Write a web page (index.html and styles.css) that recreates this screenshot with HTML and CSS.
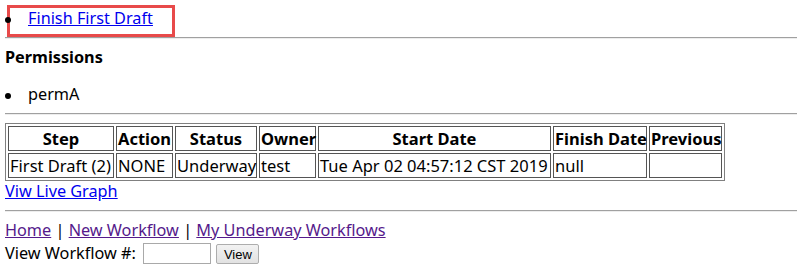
FILE: index.html
```html
<!DOCTYPE html>
<html lang="en">
<head>
    <meta charset="UTF-8">
    <title>Workflow</title>
    <link rel="stylesheet" href="styles.css">
</head>
<body>
    <div class="highlight"></div>

    <ul class="actions">
        <li><a class="link" href="#">Finish First Draft</a></li>
    </ul>
    <hr>

    <div class="section-title">Permissions</div>
    <ul class="perms">
        <li>permA</li>
    </ul>
    <hr>

    <table class="steps">
        <tr>
            <th class="col-step">Step</th>
            <th class="col-action">Action</th>
            <th class="col-status">Status</th>
            <th class="col-owner">Owner</th>
            <th class="col-start">Start Date</th>
            <th class="col-finish">Finish Date</th>
            <th class="col-prev">Previous</th>
        </tr>
        <tr>
            <td>First Draft (2)</td>
            <td>NONE</td>
            <td>Underway</td>
            <td>test</td>
            <td>Tue Apr 02 04:57:12 CST 2019</td>
            <td>null</td>
            <td></td>
        </tr>
    </table>
    <a class="link" href="#">Viw Live Graph</a>
    <hr>

    <div class="nav">
        <a class="visited" href="#">Home</a> | <a class="visited" href="#">New Workflow</a> | <a class="visited" href="#">My Underway Workflows</a>
    </div>
    <form class="view-form">
        View Workflow #: <input type="text" class="wf-input"> <button type="button" class="wf-button">View</button>
    </form>
</body>
</html>
```

FILE: styles.css
```css
body {
    margin: 8px 0 0 5px;
    font-family: "Noto Sans", Arial, sans-serif;
    font-size: 16.25px;
    line-height: 21px;
    color: #000;
    background-color: #fff;
}

.highlight {
    position: absolute;
    left: 7px;
    top: 5px;
    width: 168px;
    height: 32px;
    box-sizing: border-box;
    border: 3px solid #e84a4a;
}

ul {
    margin: 0;
    padding-left: 23px;
    list-style: none;
}

li {
    position: relative;
}

/* bullet drawn by hand so it sits where the original one does */
li::before {
    content: "";
    position: absolute;
    left: -23px;
    top: 9px;
    width: 6px;
    height: 6px;
    border-radius: 50%;
    background-color: #000;
}

.perms {
    margin-top: 16px;
}

hr {
    margin: 8px 0;
    height: 0;
    border: none;
    border-top: 1px solid #a0a0a0;
    border-bottom: 1px solid #ededed;
}

.section-title {
    font-weight: bold;
}

.link {
    color: #0000ee;
}

.visited {
    color: #551a8b;
}

/* table of steps */
.steps {
    table-layout: fixed;
    width: 720px;
    border: 1px solid #808080;
    border-spacing: 2px;
    font-size: 16.5px;
}

.steps th,
.steps td {
    box-sizing: border-box;
    border: 1px solid #555;
    padding: 1px;
    white-space: nowrap;
    height: 25px;
}

.steps td {
    text-align: left;
}

.col-step { width: 106px; }
.col-action { width: 57px; }
.col-status { width: 82px; }
.col-owner { width: 57px; }
.col-start { width: 233px; }
.col-finish { width: 94px; }
.col-prev { width: 73px; }

.view-form {
    margin: 0;
}

.wf-input {
    box-sizing: border-box;
    width: 68px;
    height: 21px;
    margin: 2px 0 0 3px;
    border: 1px solid #a9a9a9;
    padding: 1px 2px;
    vertical-align: bottom;
}

.wf-button {
    box-sizing: border-box;
    width: 43px;
    height: 20px;
    margin: 2px 0 0 1px;
    padding: 0;
    font-family: "Liberation Sans", Arial, sans-serif;
    font-size: 13px;
    color: #000;
    background: linear-gradient(#f2f2f2, #e2e2e2);
    border: 1px solid #adadad;
    border-radius: 2px;
    vertical-align: bottom;
}
```
